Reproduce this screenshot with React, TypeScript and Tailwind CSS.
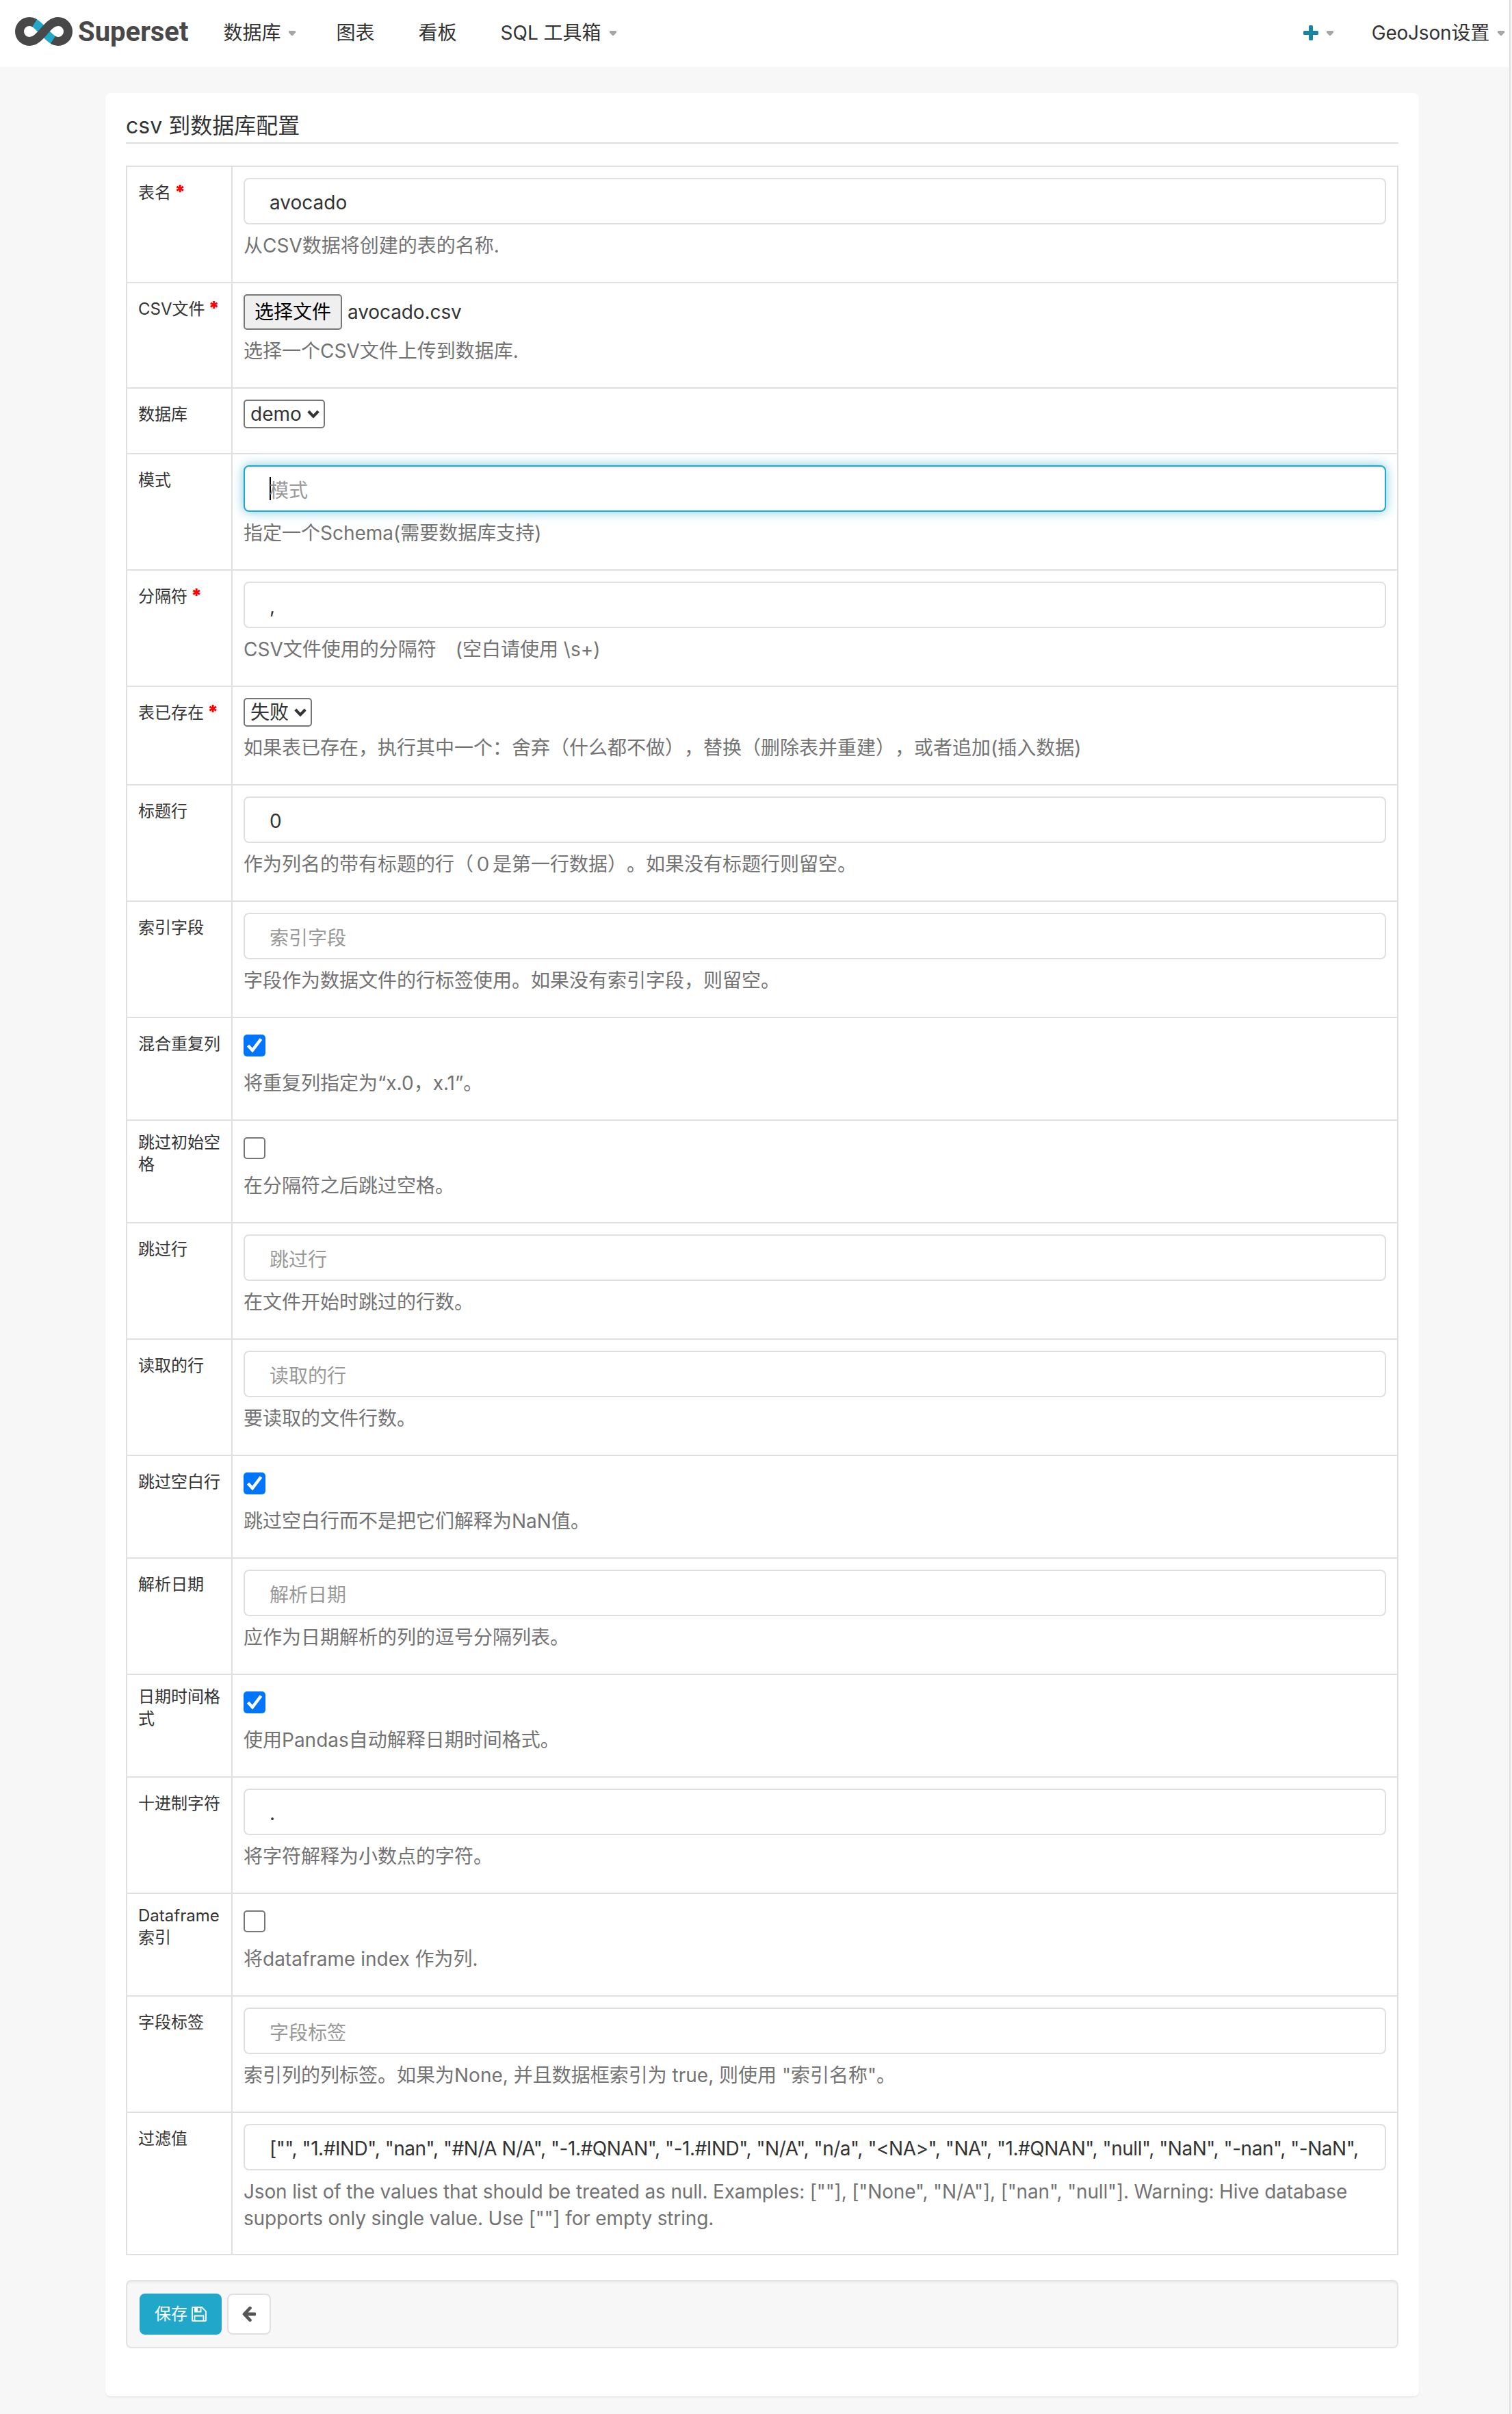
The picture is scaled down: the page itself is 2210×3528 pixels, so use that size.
import type { ReactNode } from 'react';

const FILTER_VALUES =
  '["", "1.#IND", "nan", "#N/A N/A", "-1.#QNAN", "-1.#IND", "N/A", "n/a", "<NA>", "NA", "1.#QNAN", "null", "NaN", "-nan", "-NaN",';

type Field = {
  label: string;
  required?: boolean;
  type: 'text' | 'file' | 'select' | 'checkbox';
  value?: string;
  placeholder?: string;
  checked?: boolean;
  focused?: boolean;
  help?: ReactNode;
  height: string;
};

const fields: Field[] = [
  { label: '表名', required: true, type: 'text', value: 'avocado', help: '从CSV数据将创建的表的名称.', height: 'h-[170px]' },
  { label: 'CSV文件', required: true, type: 'file', value: 'avocado.csv', help: '选择一个CSV文件上传到数据库.', height: 'h-[154px]' },
  { label: '数据库', type: 'select', value: 'demo', height: 'h-[96px]' },
  { label: '模式', type: 'text', placeholder: '模式', focused: true, help: '指定一个Schema(需要数据库支持)', height: 'h-[170px]' },
  { label: '分隔符', required: true, type: 'text', value: ',', help: 'CSV文件使用的分隔符　(空白请使用 \\s+)', height: 'h-[170px]' },
  { label: '表已存在', required: true, type: 'select', value: '失败', help: '如果表已存在，执行其中一个：舍弃（什么都不做），替换（删除表并重建），或者追加(插入数据)', height: 'h-[144px]' },
  { label: '标题行', type: 'text', value: '0', help: '作为列名的带有标题的行（０是第一行数据）。如果没有标题行则留空。', height: 'h-[170px]' },
  { label: '索引字段', type: 'text', placeholder: '索引字段', help: '字段作为数据文件的行标签使用。如果没有索引字段，则留空。', height: 'h-[170px]' },
  { label: '混合重复列', type: 'checkbox', checked: true, help: '将重复列指定为“x.0，x.1”。', height: 'h-[150px]' },
  { label: '跳过初始空格', type: 'checkbox', help: '在分隔符之后跳过空格。', height: 'h-[150px]' },
  { label: '跳过行', type: 'text', placeholder: '跳过行', help: '在文件开始时跳过的行数。', height: 'h-[170px]' },
  { label: '读取的行', type: 'text', placeholder: '读取的行', help: '要读取的文件行数。', height: 'h-[170px]' },
  { label: '跳过空白行', type: 'checkbox', checked: true, help: '跳过空白行而不是把它们解释为NaN值。', height: 'h-[150px]' },
  { label: '解析日期', type: 'text', placeholder: '解析日期', help: '应作为日期解析的列的逗号分隔列表。', height: 'h-[170px]' },
  { label: '日期时间格式', type: 'checkbox', checked: true, help: '使用Pandas自动解释日期时间格式。', height: 'h-[150px]' },
  { label: '十进制字符', type: 'text', value: '.', help: '将字符解释为小数点的字符。', height: 'h-[170px]' },
  { label: 'Dataframe 索引', type: 'checkbox', help: '将dataframe index 作为列.', height: 'h-[150px]' },
  { label: '字段标签', type: 'text', placeholder: '字段标签', help: '索引列的列标签。如果为None, 并且数据框索引为 true, 则使用 "索引名称"。', height: 'h-[170px]' },
  {
    label: '过滤值',
    type: 'text',
    value: FILTER_VALUES,
    help: (
      <span className="tracking-[-0.16px]">
        Json list of the values that should be treated as null. Examples: [""], ["None", "N/A"], ["nan", "null"]. Warning: Hive database
        <br />
        supports only single value. Use [""] for empty string.
      </span>
    ),
    height: 'h-[208px]',
  },
];

const twoLineLabels = ['跳过初始空格', '日期时间格式', 'Dataframe 索引'];

function Caret() {
  return (
    <svg className="ml-3 w-[10px] h-[7px] text-[#a6a6a6]" viewBox="0 0 10 7" fill="currentColor">
      <path d="M1 0h8a1 1 0 0 1 1 1v1.6L6.4 6.6a2 2 0 0 1-2.8 0L0 2.6V1a1 1 0 0 1 1-1z" />
    </svg>
  );
}

function Logo() {
  return (
    <div className="flex items-center">
      <svg className="w-[84px] h-[42px]" viewBox="0 0 84 42" fill="none" strokeWidth="13">
        <path d="M27 8C37 12.500 47 29.500 57 34" stroke="#20a7c9" />
        <path
          d="M28.500 8.800C26 7.200 24 6.500 21 6.500A14.500 14.500 0 0 0 21 35.500C38 35.500 46 6.500 63 6.500A14.500 14.500 0 0 1 63 35.500C60 35.500 58 34.800 55.500 33.200"
          stroke="#484848"
        />
      </svg>
      <span className="mt-[2px] ml-[8px] text-[40px] leading-[42px] font-bold font-[Roboto] text-[#484848]">Superset</span>
    </div>
  );
}

function SelectBox({ value }: { value?: string }) {
  return (
    <div className="inline-flex h-[42px] items-center rounded-[5px] border-2 border-[#767676] bg-white pl-2 pr-[6px]">
      <span className="text-[28px] leading-[36px]">{value}</span>
      <svg className="ml-[8px] w-[18px] h-[13px]" viewBox="0 0 20 14" fill="none" stroke="#333" strokeWidth="4.5">
        <path d="M2 2l8 8.500L18 2" />
      </svg>
    </div>
  );
}

function Checkbox({ checked }: { checked?: boolean }) {
  if (!checked) {
    return <div className="mt-[8px] w-8 h-8 rounded-[5px] border-2 border-[#767676] bg-white" />;
  }
  return (
    <div className="mt-[8px] flex w-8 h-8 items-center justify-center rounded-[5px] bg-[#0075ff]">
      <svg className="w-8 h-8" viewBox="0 0 32 32" fill="none" stroke="#fff" strokeWidth="4.5">
        <path d="M6.500 16l6.500 7L25.500 6.500" />
      </svg>
    </div>
  );
}

function TextBox({ field }: { field: Field }) {
  return (
    <div
      className={
        field.focused
          ? 'flex h-[68px] items-center rounded-lg border-2 border-[#20a7c9] bg-white pl-9 shadow-[inset_0_2px_2px_rgba(0,0,0,0.075),0_0_16px_rgba(32,167,201,0.6)]'
          : 'flex h-[68px] items-center rounded-lg border-2 border-[#e0e0e0] bg-white pl-9'
      }
    >
      {field.focused && <span className="-mr-[2px] h-[34px] w-[2px] bg-black" />}
      <div
        className={
          field.placeholder
            ? 'mt-[5px] whitespace-nowrap text-[28px] leading-10 text-[#999]'
            : field.value === FILTER_VALUES
              ? 'mt-1 min-w-0 whitespace-nowrap text-[28px] leading-10 tracking-[-0.47px] text-[#333]'
              : 'mt-1 whitespace-nowrap text-[28px] leading-10 text-[#333]'
        }
      >
        {field.value ?? field.placeholder}
      </div>
    </div>
  );
}

function Control({ field }: { field: Field }) {
  switch (field.type) {
    case 'file':
      return (
        <div className="flex h-[52px] items-center">
          <span className="flex h-[52px] items-center rounded-[5px] border-2 border-[#767676] bg-[#efefef] px-[14px] text-[28px] text-black">选择文件</span>
          <span className="ml-2 text-[28px] tracking-[-0.1px]">{field.value}</span>
        </div>
      );
    case 'select':
      return <SelectBox value={field.value} />;
    case 'checkbox':
      return <Checkbox checked={field.checked} />;
    default:
      return <TextBox field={field} />;
  }
}

const helpGap = {
  text: 'mt-[12px]',
  file: 'mt-[12px]',
  select: 'mt-[12px]',
  checkbox: 'mt-[20px]',
};

function Row({ field }: { field: Field }) {
  const wrapped = twoLineLabels.includes(field.label);
  return (
    <div className={`flex border-b-2 border-[#e0e0e0] ${field.height}`}>
      <div className="w-[154px] shrink-0 border-r-2 border-[#e0e0e0] pl-4 pr-3">
        <div className={wrapped ? 'mt-[16px] text-[24px] leading-8' : 'mt-[22px] whitespace-nowrap text-[24px] leading-8'}>
          {field.label}
          {field.required && <span className="ml-[5px] text-[27px] leading-none font-black text-[#ff0000]">*</span>}
        </div>
      </div>
      <div className="min-w-0 flex-1 px-4 pt-4">
        <div className="flow-root">
          <Control field={field} />
        </div>
        {field.help && <div className={`whitespace-nowrap text-[28px] leading-[39px] text-[#737373] ${helpGap[field.type]}`}>{field.help}</div>}
      </div>
    </div>
  );
}

function Navbar() {
  return (
    <nav className="flex h-[98px] items-start bg-white pl-[22px] pr-[7px] text-[28px] leading-[40px]">
      <div className="mt-[24px]">
        <Logo />
      </div>
      <div className="mt-[28px] ml-[51px] flex items-center">
        <span>数据库</span>
        <Caret />
        <span className="ml-[59px]">图表</span>
        <span className="ml-[64px]">看板</span>
        <span className="ml-[64px]">SQL 工具箱</span>
        <Caret />
      </div>
      <div className="mt-[28px] ml-auto flex items-center">
        <svg className="w-[22px] h-[22px]" viewBox="0 0 22 22" fill="#1985a0">
          <rect x="8" width="6" height="22" rx="1.5" />
          <rect y="8" width="22" height="6" rx="1.5" />
        </svg>
        <Caret />
        <span className="ml-[56px] tracking-[-0.2px]">GeoJson设置</span>
        <Caret />
      </div>
    </nav>
  );
}

export default function App() {
  return (
    <div className="flex h-[3528px] w-[2210px] bg-[#f7f7f7] font-['Inter','Noto_Sans_CJK_SC',sans-serif] text-[#333] [text-spacing-trim:space-all]">
      <div className="w-[2206px]">
        <Navbar />
        <main className="mt-[38px] ml-[154px] h-[3366px] w-[1920px] rounded-lg bg-white px-[30px] shadow-[0_2px_2px_rgba(0,0,0,0.05)]">
          <h4 className="h-[74px] border-b-2 border-[#e0e0e0] pt-[26px] text-[32px] leading-[44px]">csv 到数据库配置</h4>

          <div className="mt-8 border-x-2 border-t-2 border-[#e0e0e0]">
            {fields.map((field) => (
              <Row key={field.label} field={field} />
            ))}
          </div>

          {/* Form actions */}
          <div className="mt-9 flex h-[100px] gap-2 rounded-lg border-2 border-[#e3e3e3] bg-[#f7f7f7] p-[18px] shadow-[inset_0_2px_2px_rgba(0,0,0,0.05)]">
            <button className="flex h-[60px] w-[120px] items-center justify-center gap-[6px] rounded-lg bg-[#20a7c9] text-[24px] text-white">
              保存
              <svg className="w-[22px] h-[22px]" viewBox="0 0 22 22" fill="none" stroke="#fff" strokeWidth="1.8">
                <path d="M1 2a1 1 0 0 1 1-1h13l6 6v13a1 1 0 0 1-1 1H2a1 1 0 0 1-1-1z" />
                <path d="M5 1v6.500h8.500V1M4.500 21v-7.500h13V21" />
                <path d="M5 1h4v6.500H5z" fill="#fff" stroke="none" />
              </svg>
            </button>
            <button className="flex h-[60px] w-[64px] items-center justify-center rounded-lg border-2 border-[#e0e0e0] bg-white">
              <svg className="w-5 h-[22px]" viewBox="0 0 20 22" fill="none" stroke="#555" strokeLinejoin="round">
                <path d="M11.500 2.200L3 11l8.500 8.800" strokeWidth="4.6" strokeLinecap="round" />
                <path d="M4 11h14" strokeWidth="5" strokeLinecap="round" />
              </svg>
            </button>
          </div>
        </main>
      </div>
      <div className="w-[2px] bg-[#e0e0e0]" />
    </div>
  );
}
